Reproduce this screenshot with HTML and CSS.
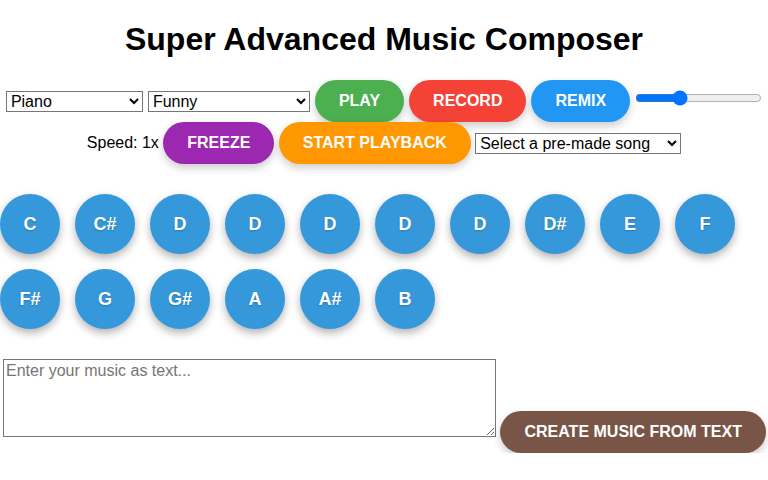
FILE: index.html
```html
<!DOCTYPE html>
<html lang="en">
<head>
<meta charset="utf-8">
<title>Super Advanced Music Composer</title>
<link rel="stylesheet" href="styles.css">
</head>
<body>
<h1 class="title">Super Advanced Music Composer</h1>
<div class="controls">
  <div class="row row-main">
    <select class="sel sel-instrument"><option>Piano</option><option>Guitar</option><option>Violin</option></select>
    <select class="sel sel-mood"><option>Funny</option><option>Sad</option><option>Happy</option></select>
    <button class="btn btn-play">PLAY</button>
    <button class="btn btn-record">RECORD</button>
    <button class="btn btn-remix">REMIX</button>
    <input class="speed" type="range" min="0.5" max="2" step="0.1" value="1">
  </div>
  <div class="row row-second">
    <span class="speed-label">Speed: 1x</span>
    <button class="btn btn-freeze">FREEZE</button>
    <button class="btn btn-start">START PLAYBACK</button>
    <select class="sel sel-song"><option>Select a pre-made song</option></select>
  </div>
</div>
<div class="notes">
  <button class="note">C</button>
  <button class="note">C#</button>
  <button class="note">D</button>
  <button class="note">D</button>
  <button class="note">D</button>
  <button class="note">D</button>
  <button class="note">D</button>
  <button class="note">D#</button>
  <button class="note">E</button>
  <button class="note">F</button>
  <button class="note">F#</button>
  <button class="note">G</button>
  <button class="note">G#</button>
  <button class="note">A</button>
  <button class="note">A#</button>
  <button class="note">B</button>
</div>
<div class="text-area-row"><textarea class="music-text" placeholder="Enter your music as text..."></textarea> <button class="btn btn-create">CREATE MUSIC FROM TEXT</button></div>
</body>
</html>
```
FILE: styles.css
```css
body {
  margin: 0;
  font-family: "Liberation Sans", Arial, sans-serif;
  background: #ffffff;
  color: #000;
}
.title {
  font-size: 32px;
  font-weight: bold;
  text-align: center;
  margin: 21px 0 22px;
  line-height: 37px;
}
.controls {
  display: flex;
  flex-direction: column;
  align-items: center;
}
.row {
  display: flex;
  align-items: center;
  justify-content: center;
}
.row-main { gap: 5px; }
.row-second { gap: 4.4px; }
.sel {
  font-family: "Liberation Sans", Arial, sans-serif;
  font-size: 16px;
  height: 21px;
  padding: 0;
  border: 1px solid #767676;
  border-radius: 0;
  background: #fff;
  color: #000;
}
.sel-instrument { width: 137px; }
.sel-mood { width: 162px; }
.sel-song { width: 206px; }
.btn {
  font-family: "Liberation Sans", Arial, sans-serif;
  font-size: 16px;
  font-weight: bold;
  color: #fff;
  border: none;
  border-radius: 25px;
  padding: 12px 24px;
  line-height: 18px;
  height: 42px;
  box-shadow: 0 4px 8px rgba(0, 0, 0, 0.2);
  cursor: pointer;
}
.btn-play { background: #4caf50; }
.btn-record { background: #f44336; }
.btn-remix { background: #2196f3; }
.btn-freeze { background: #9c27b0; }
.btn-start { background: #ff9800; }
.btn-create { background: #795548; vertical-align: baseline; }
.speed {
  width: 127px;
  margin: 0 0 6px 0;
  accent-color: #0075ff;
}
.speed-label {
  font-size: 16px;
}
.notes {
  display: flex;
  flex-wrap: wrap;
  gap: 15px;
  margin-top: 30px;
}
.note {
  width: 60px;
  height: 60px;
  border-radius: 50%;
  border: none;
  padding: 0;
  background: #3498db;
  color: #fff;
  font-family: "Liberation Sans", Arial, sans-serif;
  font-size: 18px;
  font-weight: bold;
  box-shadow: 0 4px 8px rgba(0, 0, 0, 0.3);
  text-shadow: 0 1px 2px rgba(0, 0, 0, 0.2);
}
.text-area-row {
  margin-top: 30px;
}
.music-text {
  box-sizing: border-box;
  width: 493px;
  height: 78px;
  margin: 0 0 0 3px;
  padding: 2px;
  font-family: "Liberation Sans", Arial, sans-serif;
  font-size: 16px;
  border: 1px solid #767676;
  vertical-align: baseline;
}
.music-text::placeholder { color: #757575; }
```
